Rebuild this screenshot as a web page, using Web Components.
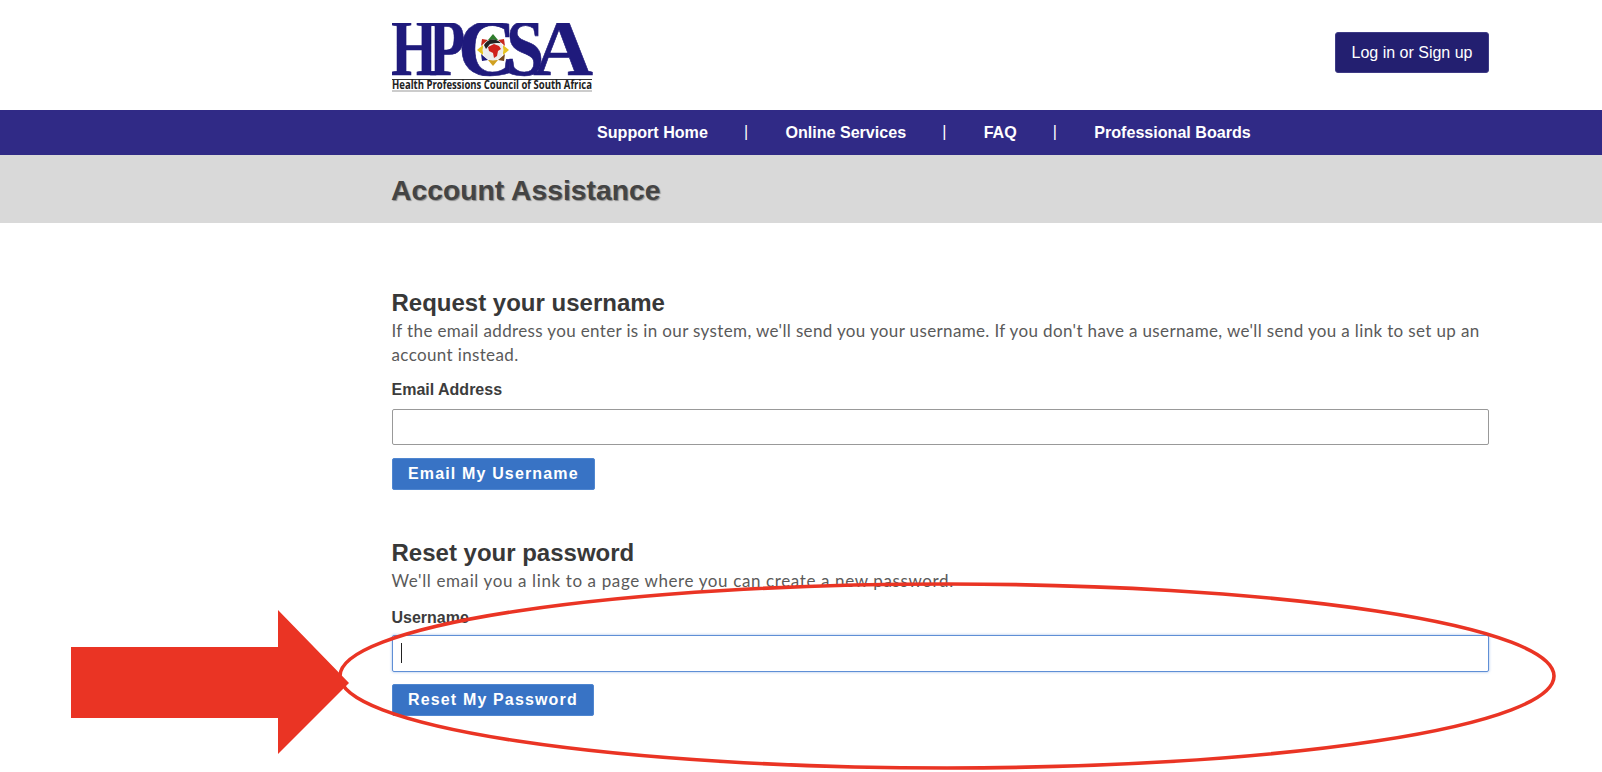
<!DOCTYPE html>
<html lang="en">
<head>
<meta charset="utf-8">
<title>Account Assistance</title>
<style>
  html, body { margin: 0; padding: 0; background: #fff; }
  body { position: relative; height: 772px; overflow: hidden; font-family: "Liberation Sans", Arial, sans-serif; }
</style>
</head>
<body>
<hp-header></hp-header>
<hp-nav>
  <a>Support Home</a>
  <a>Online Services</a>
  <a>FAQ</a>
  <a>Professional Boards</a>
</hp-nav>
<hp-titlebar>Account Assistance</hp-titlebar>
<hp-main>
  <hp-form heading="Request your username" label="Email Address" action="Email My Username">If the email address you enter is in our system, we'll send you your username. If you don't have a username, we'll send you a link to set up an account instead.</hp-form>
  <hp-form heading="Reset your password" label="Username" action="Reset My Password" focused>We'll email you a link to a page where you can create a new password.</hp-form>
</hp-main>
<hp-annotation></hp-annotation>

<script>
class HpLogo extends HTMLElement {
  constructor() {
    super();
    this.attachShadow({mode: 'open'});
    // letters are placed one by one, they overlap in the real logo
    this.shadowRoot.innerHTML = `
      <style>
        :host { display: block; width: 202px; height: 70px; }
        svg { display: block; }
        .big { font: 700 80px "Liberation Serif", serif; fill: #1f1a7c; stroke: #1f1a7c; stroke-width: .6; }
        .sub { font: 700 11.5px "Open Sans", "Liberation Sans", sans-serif; fill: #222; }
      </style>
      <svg width="202" height="70" viewBox="0 0 202 70">
        <text class="big" x="-1" y="52" textLength="46" lengthAdjust="spacingAndGlyphs">H</text>
        <text class="big" x="37" y="52" textLength="36" lengthAdjust="spacingAndGlyphs">P</text>
        <text class="big" x="66" y="52" textLength="58" lengthAdjust="spacingAndGlyphs">C</text>
        <text class="big" x="114" y="52" textLength="38" lengthAdjust="spacingAndGlyphs">S</text>
        <text class="big" x="141" y="52" textLength="60" lengthAdjust="spacingAndGlyphs">A</text>
        <g transform="translate(101 27)">
          <polygon points="0,-16 5,-10 -5,-10" fill="#2f7d2c"/>
          <polygon points="11,-11 12,-4 5,-10" fill="#c8281c"/>
          <polygon points="16,0 10,5 10,-5" fill="#e6c21e"/>
          <polygon points="11,11 5,10 12,4" fill="#7a4a1e"/>
          <polygon points="0,16 -5,10 5,10" fill="#d0a020"/>
          <polygon points="-11,11 -12,4 -5,10" fill="#1f1a7c"/>
          <polygon points="-16,0 -10,-5 -10,5" fill="#e6c21e"/>
          <polygon points="-11,-11 -5,-10 -12,-4" fill="#c8281c"/>
          <circle r="10.5" fill="#ececec"/>
          <path d="M-9 -5 A10.5 10.5 0 0 1 8 -7 L3 -7 L-3 -6 L-7 -1 Z" fill="#222"/>
          <path d="M-5 -3 L1 -6 L6 -4 L8 -1 L5 1 L4 6 L1 8 L0 3 L-4 1 Z" fill="#d0201c"/>
        </g>
        <rect x="0" y="56" width="200" height="1" fill="#333"/>
        <text class="sub" x="0" y="65.5" textLength="200" lengthAdjust="spacingAndGlyphs">Health Professions Council of South Africa</text>
        <rect x="0" y="67.5" width="200" height="1" fill="#999"/>
      </svg>
    `;
  }
}

class HpHeader extends HTMLElement {
  constructor() {
    super();
    this.attachShadow({mode: 'open'});
    this.shadowRoot.innerHTML = `
      <style>
        :host { display: block; height: 110px; }
        .wrap { width: 1097px; margin-left: 392px; display: flex; justify-content: space-between; align-items: flex-start; }
        hp-logo { margin-top: 23px; }
        button {
          margin-top: 32px; width: 154px; height: 41px; padding: 0;
          background: #231f70; color: #fff; border: 1px solid #3d3a85; border-radius: 3px;
          font: 16px "Liberation Sans", Arial, sans-serif;
        }
      </style>
      <div class="wrap">
        <hp-logo></hp-logo>
        <button>Log in or Sign up</button>
      </div>
    `;
  }
}

class HpNav extends HTMLElement {
  constructor() {
    super();
    this.attachShadow({mode: 'open'});
    this.shadowRoot.innerHTML = `
      <style>
        :host {
          display: flex; align-items: center; height: 45px; padding-left: 597px;
          background: #302a86; color: #fff;
          font: 700 16.1px "Liberation Sans", Arial, sans-serif;
        }
        ::slotted(a) { display: block; }
        ::slotted(a:not(:first-child)) { margin-left: 77.5px; position: relative; }
      </style>
      <slot></slot>
    `;
  }
  connectedCallback() {
    // separators between the links
    [...this.querySelectorAll('a')].slice(1).forEach(a => {
      const sep = document.createElement('span');
      sep.textContent = '|';
      sep.style.cssText = 'position:absolute;left:-41.5px;font-weight:400;font-size:16px;top:0';
      a.prepend(sep);
    });
  }
}

class HpTitlebar extends HTMLElement {
  constructor() {
    super();
    this.attachShadow({mode: 'open'});
    this.shadowRoot.innerHTML = `
      <style>
        :host {
          display: flex; align-items: center; height: 68px; padding-left: 391px; padding-top: 2px; box-sizing: border-box;
          background: #d9d9d9; color: #444;
          font: 700 28.3px "Liberation Sans", Arial, sans-serif;
          text-shadow: 1px 1px 1px #8a8a8a;
        }
      </style>
      <slot></slot>
    `;
  }
}

class HpMain extends HTMLElement {
  constructor() {
    super();
    this.attachShadow({mode: 'open'});
    this.shadowRoot.innerHTML = `
      <style>
        :host { display: flex; flex-direction: column; gap: 48px; width: 1097.5px; margin-left: 391.5px; padding-top: 65px; }
      </style>
      <slot></slot>
    `;
  }
}

class HpForm extends HTMLElement {
  constructor() {
    super();
    this.attachShadow({mode: 'open'});
    this.shadowRoot.innerHTML = `
      <style>
        :host { display: block; color: #333; font-family: "Liberation Sans", Arial, sans-serif; }
        h2 { margin: 0; font-size: 24px; line-height: 30px; font-weight: 700; color: #383838; }
        p { margin: 1px 0 0; font: 400 17px/24px Lato, sans-serif; letter-spacing: .36px; color: #5a5a5a; }
        label { display: block; margin-top: 13px; font-size: 16px; line-height: 20px; font-weight: 700; color: #3c3c3c; }
        .field { position: relative; margin-top: 9px; }
        input {
          display: block; box-sizing: border-box; width: 100%; height: 36px; margin: 0; padding: 0 8px;
          background: #fff; border: 1px solid #999; border-radius: 2px; outline: none;
        }
        .caret { display: none; position: absolute; left: 9px; top: 8px; width: 1px; height: 20px; background: #222; }
        :host([focused]) p { letter-spacing: .62px; }
        :host([focused]) label { margin-top: 15px; }
        :host([focused]) .field { margin-top: 7px; }
        :host([focused]) input { height: 37px; border-color: #5f8fd6; box-shadow: 0 0 3px rgba(95,143,214,.6); }
        :host([focused]) .caret { display: block; }
        :host([focused]) button { margin-top: 12px; }
        button {
          display: block; margin-top: 13px; height: 32px; padding: 0 15.5px;
          background: #3873c5; color: #fff; border: 1px solid #4f86d0; border-radius: 2px;
          font: 700 16px "Liberation Sans", Arial, sans-serif; letter-spacing: 1.15px;
        }
      </style>
      <h2></h2>
      <p><slot></slot></p>
      <label></label>
      <div class="field"><input type="text"><span class="caret"></span></div>
      <button></button>
    `;
  }
  connectedCallback() {
    this.shadowRoot.querySelector('h2').textContent = this.getAttribute('heading');
    this.shadowRoot.querySelector('label').textContent = this.getAttribute('label');
    this.shadowRoot.querySelector('button').textContent = this.getAttribute('action');
  }
}

// red arrow and ellipse someone drew over the screenshot
class HpAnnotation extends HTMLElement {
  constructor() {
    super();
    this.attachShadow({mode: 'open'});
    this.shadowRoot.innerHTML = `
      <style>
        :host { position: absolute; left: 0; top: 0; width: 1602px; height: 772px; pointer-events: none; }
        svg { display: block; }
      </style>
      <svg width="1602" height="772" viewBox="0 0 1602 772">
        <ellipse cx="947" cy="676" rx="607" ry="92" fill="none" stroke="#ea3424" stroke-width="3.6"/>
        <polygon points="71,647 278,647 278,610 349,683 278,754 278,718 71,718" fill="#ea3424"/>
      </svg>
    `;
  }
}

customElements.define('hp-logo', HpLogo);
customElements.define('hp-header', HpHeader);
customElements.define('hp-nav', HpNav);
customElements.define('hp-titlebar', HpTitlebar);
customElements.define('hp-main', HpMain);
customElements.define('hp-form', HpForm);
customElements.define('hp-annotation', HpAnnotation);
</script>
</body>
</html>
